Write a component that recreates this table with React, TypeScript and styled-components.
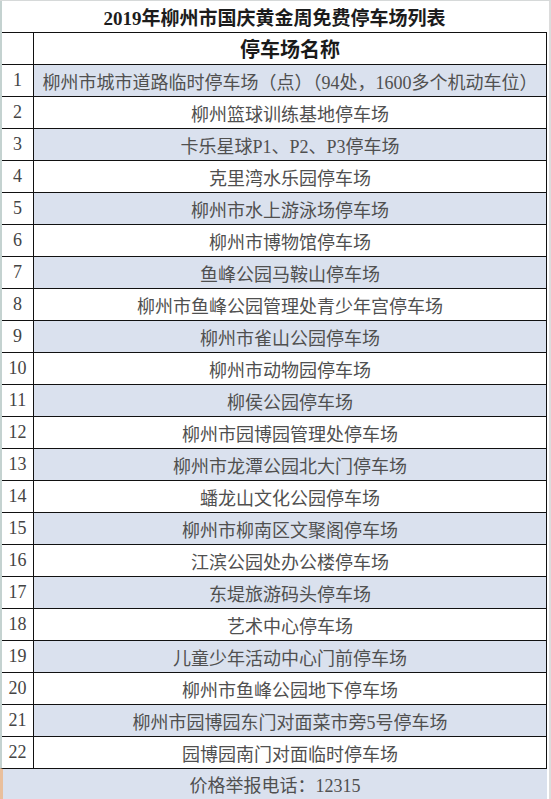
import React from "react";
import styled, { createGlobalStyle } from "styled-components";

const GlobalStyle = createGlobalStyle`
  html, body { margin: 0; padding: 0; background: #ffffff; }
  body { font-family: "Liberation Serif", "Noto Sans CJK SC", serif; }
`;

const names = [
  "柳州市城市道路临时停车场（点）（94处，1600多个机动车位）",
  "柳州篮球训练基地停车场",
  "卡乐星球P1、P2、P3停车场",
  "克里湾水乐园停车场",
  "柳州市水上游泳场停车场",
  "柳州市博物馆停车场",
  "鱼峰公园马鞍山停车场",
  "柳州市鱼峰公园管理处青少年宫停车场",
  "柳州市雀山公园停车场",
  "柳州市动物园停车场",
  "柳侯公园停车场",
  "柳州市园博园管理处停车场",
  "柳州市龙潭公园北大门停车场",
  "蟠龙山文化公园停车场",
  "柳州市柳南区文聚阁停车场",
  "江滨公园处办公楼停车场",
  "东堤旅游码头停车场",
  "艺术中心停车场",
  "儿童少年活动中心门前停车场",
  "柳州市鱼峰公园地下停车场",
  "柳州市园博园东门对面菜市旁5号停车场",
  "园博园南门对面临时停车场",
];

const Page = styled.div`
  width: 551px;
  height: 799px;
  box-sizing: border-box;
  border-top: 1px solid #d6d9d9;
  border-right: 2px solid #dcdcdc;
  overflow: hidden;
  display: flex;
  flex-direction: column;
`;

const Sheet = styled.div`
  width: 547px;
  box-sizing: border-box;
  border-left: 2px solid #c4d2d0;
  display: flex;
  flex-direction: column;
`;

const Title = styled.div`
  height: 31px;
  display: flex;
  align-items: center;
  justify-content: center;
  font-size: 19px;
  font-weight: bold;
  color: #1c1c1c;
`;

const Row = styled.div<{ $shade?: boolean }>`
  height: 32px;
  box-sizing: border-box;
  border-top: 1px solid #111;
  border-right: 1px solid #111;
  display: grid;
  grid-template-columns: 32px 1fr;
  background: ${(p) => (p.$shade ? "#dae1ee" : "#ffffff")};
`;

const NumCell = styled.div`
  background: #ffffff;
  border-right: 1px solid #111;
  display: flex;
  align-items: center;
  justify-content: center;
  font-size: 18px;
  color: #444444;
`;

const NameCell = styled.div<{ $bold?: boolean }>`
  display: flex;
  align-items: center;
  justify-content: center;
  font-size: ${(p) => (p.$bold ? "20px" : "18px")};
  font-weight: ${(p) => (p.$bold ? "bold" : "normal")};
  color: ${(p) => (p.$bold ? "#1a1a1a" : "#505050")};
  white-space: nowrap;
`;

const Footer = styled.div`
  width: 547px;
  height: 31px;
  box-sizing: border-box;
  border-top: 1px solid #111;
  border-left: 3px solid #e9bf9c;
  background: #dae1ee;
  display: flex;
  align-items: center;
  justify-content: center;
  font-size: 18px;
  color: #505050;
`;

export default function App() {
  return (
    <>
      <GlobalStyle />
      <Page>
        <Sheet>
          <Title>2019年柳州市国庆黄金周免费停车场列表</Title>
          <Row>
            <NumCell />
            <NameCell $bold>停车场名称</NameCell>
          </Row>
          {names.map((n, i) => (
            <Row key={i} $shade={i % 2 === 0}>
              <NumCell>{i + 1}</NumCell>
              <NameCell>{n}</NameCell>
            </Row>
          ))}
        </Sheet>
        <Footer>价格举报电话：12315</Footer>
      </Page>
    </>
  );
}
